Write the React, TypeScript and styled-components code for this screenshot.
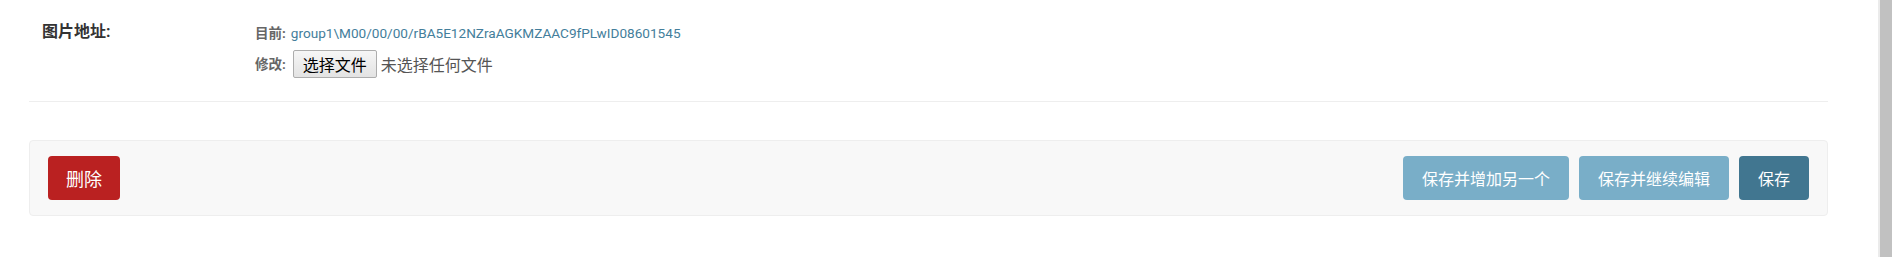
import React from 'react'
import styled, { createGlobalStyle } from 'styled-components'

const GlobalStyle = createGlobalStyle`
html, body {
  margin: 0;
  padding: 0;
  background: #fff;
}
body {
  font-family: Roboto, "Noto Sans CJK SC", "DejaVu Sans", sans-serif;
  color: #333;
}
`

const Page = styled.div`
display: flex;
height: 100vh;
overflow: hidden;
`

const Main = styled.div`
flex: 1;
padding: 0 50px 0 29px;
`

const Scrollbar = styled.div`
width: 12px;
border-left: 2px solid #ebebeb;
background: #c1c1c1;
`

const FormRow = styled.div`
display: flex;
padding: 22px 13px 0 13px;
height: 79px;
border-bottom: 1px solid #eee;
`

const Label = styled.label`
width: 213px;
flex-shrink: 0;
font-size: 16px;
line-height: 20px;
font-weight: bold;
color: #333;
`

const Field = styled.div`
display: flex;
flex-direction: column;
padding-top: 2px;
`

const Line = styled.div<{ $top?: number }>`
display: flex;
align-items: flex-start;
margin-top: ${p => p.$top || 0}px;
`

const SmallLabel = styled.span<{ $offset?: number; $gap?: number }>`
font-size: 13.5px;
line-height: 18px;
font-weight: bold;
color: #666;
margin-right: ${p => p.$gap || 5}px;
margin-top: ${p => p.$offset || 0}px;
`

const FileLink = styled.a`
font-size: 13.6px;
line-height: 18px;
color: #447e9b;
text-decoration: none;
`

const FileButton = styled.button`
height: 28px;
width: 84px;
padding: 0;
font-family: "Noto Sans CJK SC", sans-serif;
font-size: 16px;
color: #000;
background: linear-gradient(#f6f6f6, #e3e3e3);
border: 1px solid #adadad;
border-radius: 2px;
`

const FileName = styled.span`
align-self: center;
margin-left: 4px;
font-family: "Noto Sans CJK SC", sans-serif;
font-size: 16px;
color: #555;
`

const SubmitRow = styled.div`
display: flex;
align-items: center;
margin-top: 38px;
padding: 15px 18px;
background: #f8f8f8;
border: 1px solid #eee;
border-radius: 4px;
`

const Spacer = styled.div`
flex: 1;
`

const ActionButton = styled.button<{ $bg: string; $pad?: number; $size?: number }>`
height: 44px;
padding: 0 ${p => p.$pad || 19}px;
margin-left: 10px;
font-family: "Noto Sans CJK SC", sans-serif;
font-size: ${p => p.$size || 16}px;
color: #fff;
background: ${p => p.$bg};
border: none;
border-radius: 4px;
&:first-child {
  margin-left: 0;
}
`

const App = () => {
    return (
        <>
            <GlobalStyle />
            <Page>
                <Main>
                    <FormRow>
                        <Label>图片地址:</Label>
                        <Field>
                            <Line>
                                <SmallLabel>目前:</SmallLabel>
                                <FileLink href="#">group1\M00/00/00/rBA5E12NZraAGKMZAAC9fPLwID08601545</FileLink>
                            </Line>
                            <Line $top={8}>
                                <SmallLabel $offset={5} $gap={7}>修改:</SmallLabel>
                                <FileButton>选择文件</FileButton>
                                <FileName>未选择任何文件</FileName>
                            </Line>
                        </Field>
                    </FormRow>
                    <SubmitRow>
                        <ActionButton $bg="#ba2121" $pad={18} $size={18}>删除</ActionButton>
                        <Spacer />
                        <ActionButton $bg="#79aec8">保存并增加另一个</ActionButton>
                        <ActionButton $bg="#79aec8">保存并继续编辑</ActionButton>
                        <ActionButton $bg="#417690">保存</ActionButton>
                    </SubmitRow>
                </Main>
                <Scrollbar />
            </Page>
        </>
    )
}

export default App
